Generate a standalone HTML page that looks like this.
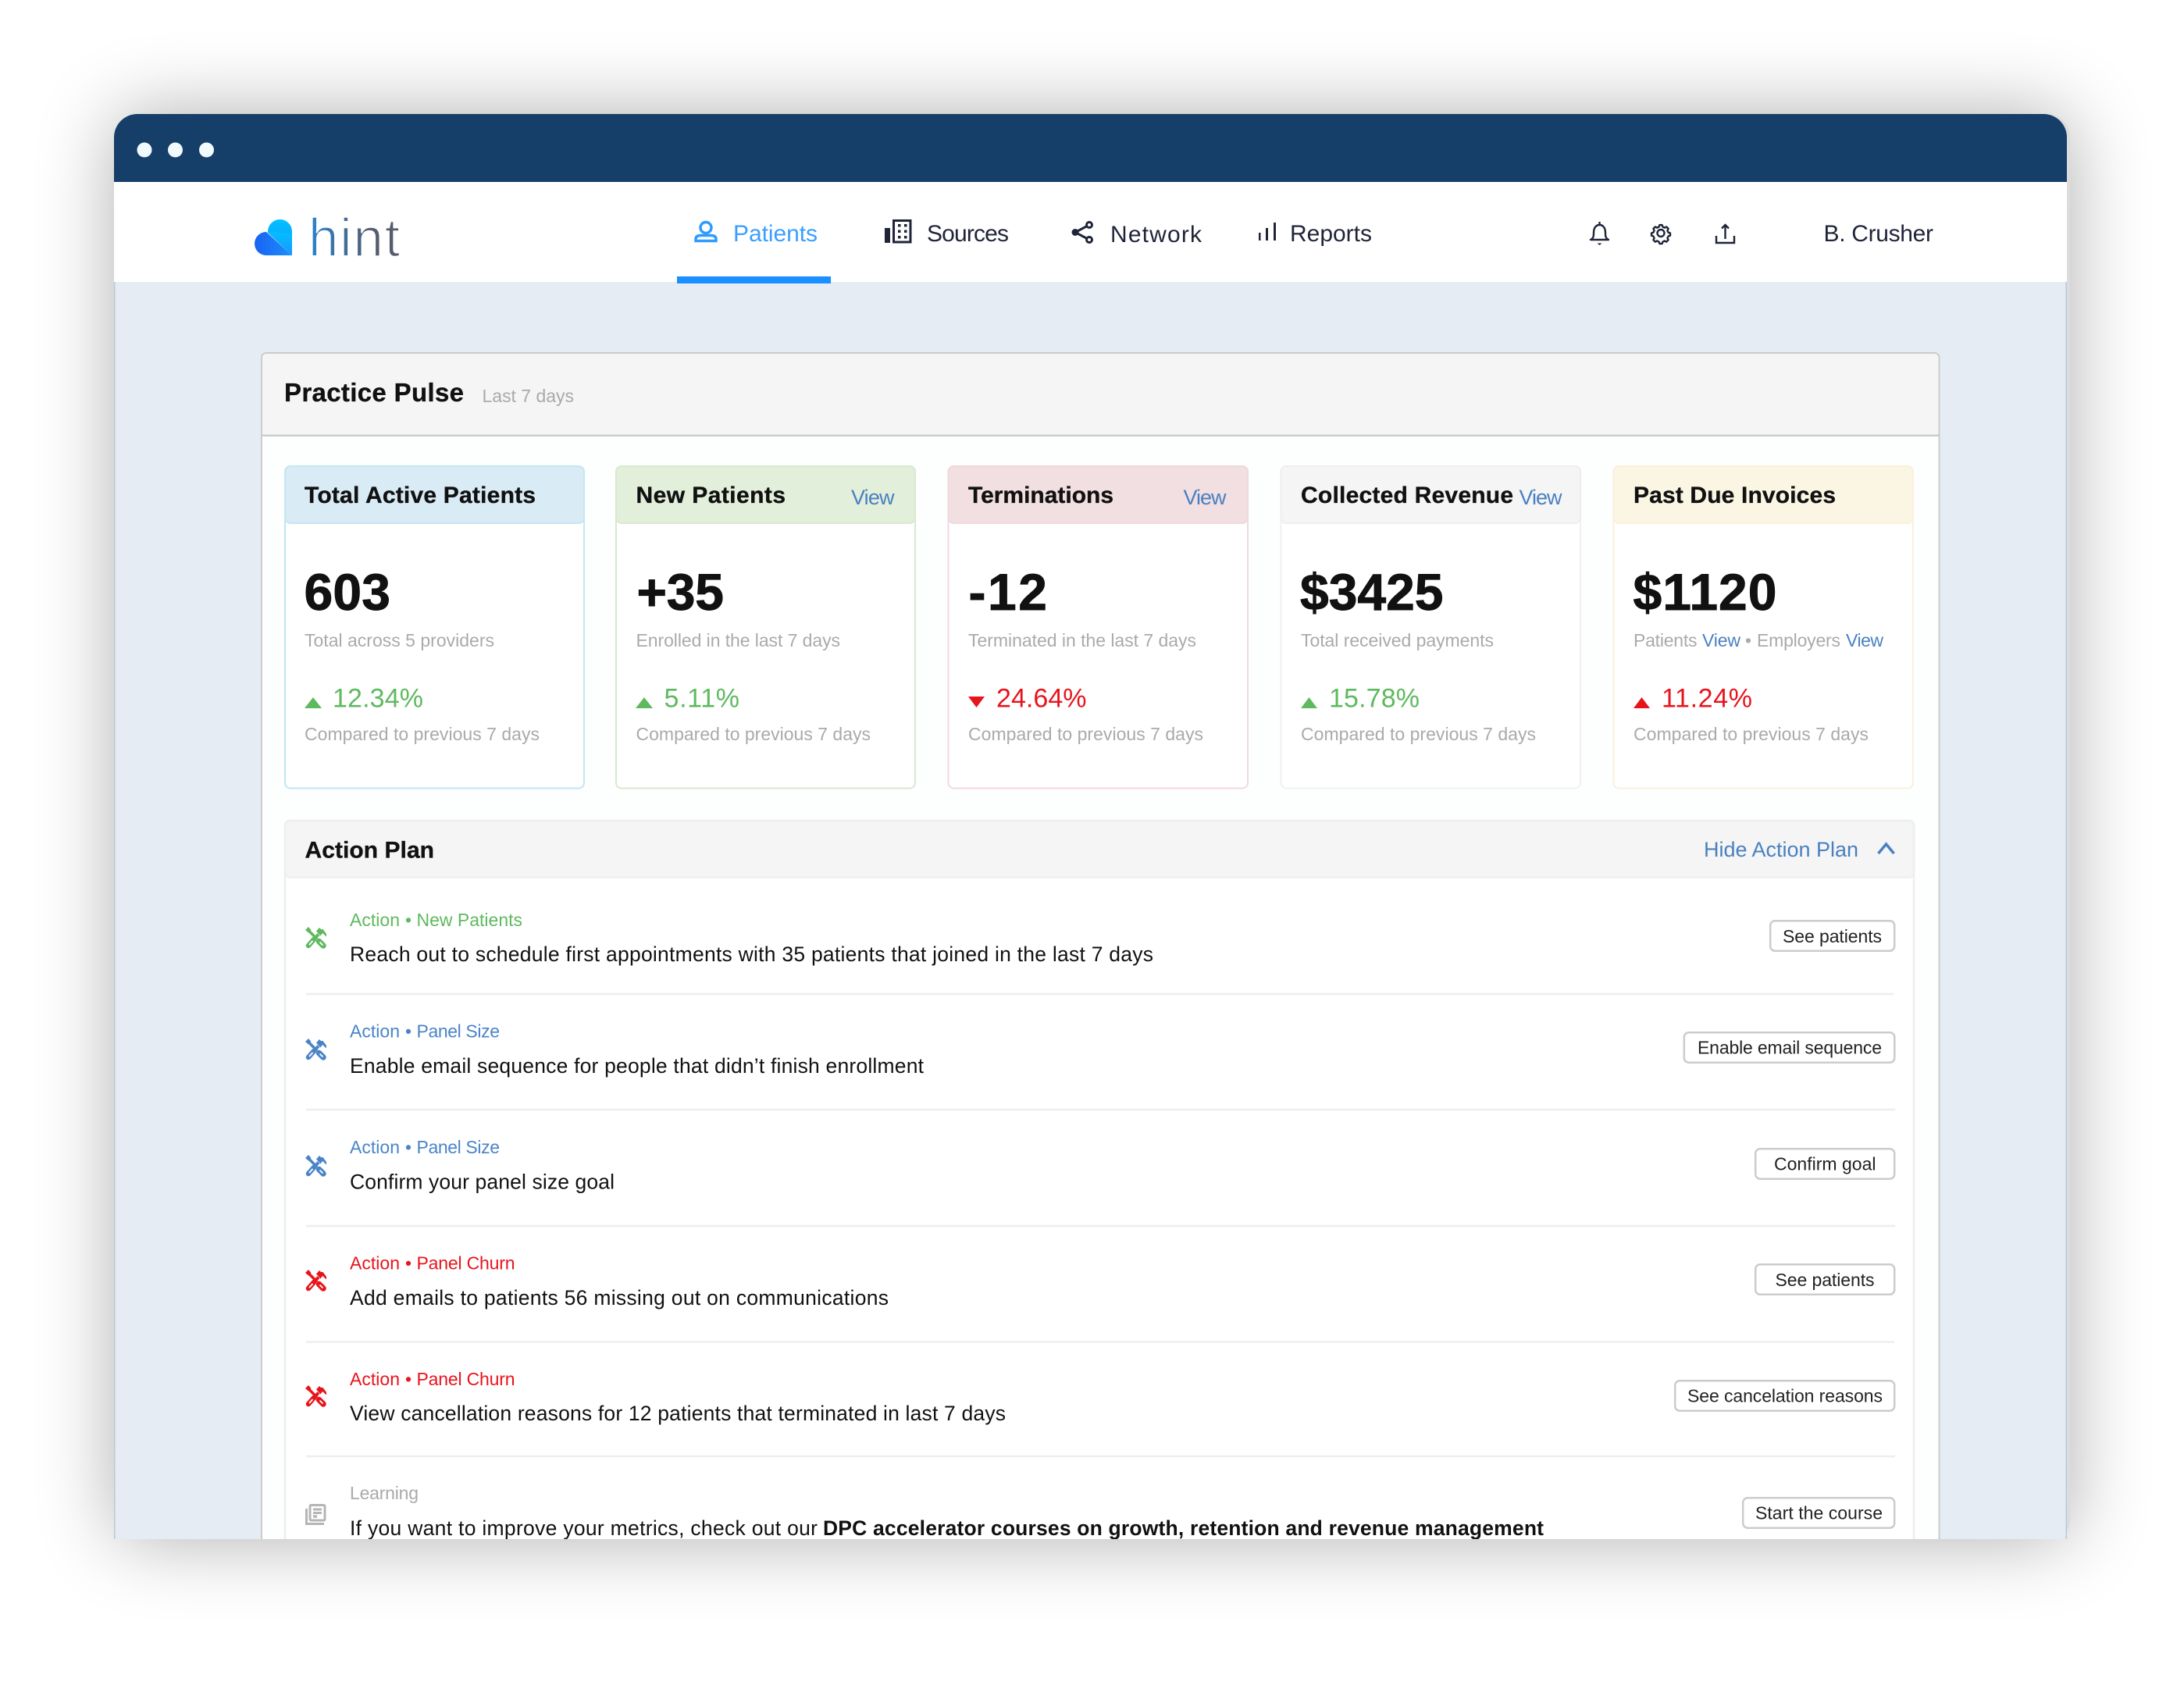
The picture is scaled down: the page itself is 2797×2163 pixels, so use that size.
<!DOCTYPE html>
<html lang="en">
<head>
<meta charset="utf-8">
<title>Hint - Practice Pulse</title>
<style>
html,body{margin:0;padding:0;background:#fff;width:2797px;height:2163px;overflow:hidden}
#sh{position:absolute;left:148px;top:146px;width:2503px;height:1825px;border-radius:30px 30px 24px 24px;box-shadow:0 0 100px rgba(0,0,0,.32);background:#dcdcdc}
svg{position:absolute;left:0;top:0}
text{font-family:"Liberation Sans",Arial,sans-serif;white-space:pre}
.nav{font-size:30px;fill:#1f2438}
.b{font-weight:700;fill:#111;stroke:#111;stroke-width:.35}
.t{font-size:30px;font-weight:700;fill:#111;stroke:#111;stroke-width:.35}
.v{font-size:27px;fill:#4a80c0}
.n{font-size:66px;font-weight:700;fill:#111;stroke:#111;stroke-width:.9}
.s{font-size:23px;fill:#aaa}
.sv{font-size:23px;fill:#4a80c0}
.d{font-size:34px}
.g{fill:#5fb95f}
.r{fill:#e8141c}
.bl{fill:#4a84c8}
.gy{fill:#aaa}
.l{font-size:23px}
.m{font-size:26.5px;fill:#111}
.bt{font-size:23px;fill:#222}
.br{fill:#fff;stroke:#ccc;stroke-width:2.5}
.dv{stroke:#eee;stroke-width:2.5}
</style>
</head>
<body>
<div id="sh"></div>
<svg width="2797" height="2163" viewBox="0 0 2797 2163" xmlns="http://www.w3.org/2000/svg">
<defs>
<clipPath id="win"><path d="M146 176a30 30 0 0 1 30-30H2617a30 30 0 0 1 30 30V1971H146Z"/></clipPath>
<linearGradient id="lg1" x1="0" y1="0" x2="0" y2="1"><stop offset="0" stop-color="#00c2ff"/><stop offset="1" stop-color="#1a94ff"/></linearGradient>
<linearGradient id="lg2" x1="0" y1="0" x2="1" y2="0"><stop offset="0" stop-color="#1a62f2"/><stop offset="1" stop-color="#1a90fb"/></linearGradient>
<linearGradient id="lg3" gradientUnits="userSpaceOnUse" x1="399" y1="0" x2="480" y2="0"><stop offset="0" stop-color="#2a82c8"/><stop offset="1" stop-color="#555c6d"/></linearGradient>
<g id="tools">
  <path d="M3 3.500L15 15.500" fill="none" stroke="currentColor" stroke-width="3.500"/>
  <path d="M0 4L4 0L7.500 4L4 7.500Z" fill="currentColor"/>
  <path d="M17.500 18.500L23 24" fill="none" stroke="currentColor" stroke-width="7.500" stroke-linecap="round"/>
  <path d="M18.500 19.500L22.500 23.500" fill="none" stroke="#fff" stroke-width="1.800"/>
  <path d="M11 16L17 9.500" fill="none" stroke="currentColor" stroke-width="4"/>
  <path d="M4 24L11 16" fill="none" stroke="currentColor" stroke-width="6.500" stroke-linecap="round"/>
  <path d="M5 23L9.500 18" fill="none" stroke="#fff" stroke-width="1.800"/>
  <path d="M14 5.500L18 1L20 3L22.500 3L27 9V12.500L22 8L19.500 11.500Z" fill="currentColor"/>
</g>
</defs>

<g clip-path="url(#win)">
<rect x="146" y="146" width="2501" height="1825" fill="#e6ecf4"/>
<rect x="146" y="361" width="1.500" height="1610" fill="#b9c8d8"/>
<rect x="2645.500" y="361" width="1.500" height="1610" fill="#b9c8d8"/>
<rect x="146" y="146" width="2501" height="87" fill="#153f69"/>
<circle cx="185" cy="192" r="9.500" fill="#f0faff"/>
<circle cx="224.500" cy="192" r="9.500" fill="#f0faff"/>
<circle cx="264.500" cy="192" r="9.500" fill="#f0faff"/>
<rect x="146" y="233" width="2501" height="128" fill="#fff"/>
<rect x="867" y="354" width="197" height="9" fill="#1a8fff"/>

<!-- logo -->
<path d="M343 296.500A15.500 15.500 0 0 1 374 296.500V327L343 298Z" fill="url(#lg1)"/>
<path d="M341 297A15 15 0 0 0 341 327H374Z" fill="url(#lg2)"/>
<path d="M343 296.500L374 327V300Z" fill="url(#lg1)"/>
<text x="395" y="328" font-size="69" fill="url(#lg3)" stroke="#fff" stroke-width="1.600" textLength="117">hint</text>

<!-- nav icons -->
<g fill="none" stroke="#2f9bff" stroke-width="3.500">
  <circle cx="904" cy="291.500" r="7"/>
  <path d="M891 308.500V306Q891 301.500 898 301.500H910Q917 301.500 917 306V308.500Z"/>
</g>
<text class="nav" x="939" y="309" style="fill:#3a9eff" textLength="108">Patients</text>

<rect x="1133" y="292" width="7" height="19" fill="#1f2438"/>
<rect x="1144.500" y="282.500" width="21.500" height="27.500" fill="none" stroke="#1f2438" stroke-width="3"/>
<g fill="#1f2438">
  <rect x="1150" y="287" width="3.500" height="3.500"/><rect x="1158" y="287" width="3.500" height="3.500"/>
  <rect x="1150" y="294.500" width="3.500" height="3.500"/><rect x="1158" y="294.500" width="3.500" height="3.500"/>
  <rect x="1150" y="302" width="3.500" height="3.500"/><rect x="1158" y="302" width="3.500" height="3.500"/>
</g>
<text class="nav" x="1187" y="309" textLength="105">Sources</text>

<path d="M1395 288L1377 297.500L1395 307" fill="none" stroke="#1f2438" stroke-width="3"/>
<circle cx="1395" cy="288" r="3.500" fill="#fff" stroke="#1f2438" stroke-width="3"/>
<circle cx="1395" cy="307" r="3.500" fill="#fff" stroke="#1f2438" stroke-width="3"/>
<circle cx="1377" cy="297.500" r="4.500" fill="#1f2438"/>
<text class="nav" x="1422" y="310" textLength="117">Network</text>

<g fill="#1f2438">
  <rect x="1612" y="298" width="2.500" height="10"/>
  <rect x="1621" y="292" width="3" height="16"/>
  <rect x="1631" y="285" width="3" height="23"/>
</g>
<text class="nav" x="1652" y="309" textLength="105">Reports</text>

<g fill="none" stroke="#1f2438" stroke-width="2.400">
  <path d="M2048.500 284V288"/>
  <path d="M2037 307H2060C2056 305 2056 302 2056 298C2056 292 2053 288 2048.500 288C2044 288 2041 292 2041 298C2041 302 2041 305 2037 307Z" stroke-linejoin="round"/>
  <g transform="translate(2127 298.500) scale(.8) translate(-2127 -298.500)" stroke-width="3">
    <path d="M2125 285.500h4l1 3 3 1.500 3-1.500 3 3-1.500 3 1.500 3 3 1v4l-3 1-1.500 3 1.500 3-3 3-3-1.500-3 1.500-1 3h-4l-1-3-3-1.500-3 1.500-3-3 1.500-3-1.500-3-3-1v-4l3-1 1.500-3-1.500-3 3-3 3 1.500 3-1.500Z" stroke-linejoin="round"/>
  </g>
  <circle cx="2127" cy="298.500" r="4.500"/>
  <path d="M2198 302V311H2221V302"/>
  <path d="M2209.500 306V288"/>
  <path d="M2205 292.500L2209.500 288L2214 292.500"/>
</g>
<path d="M2045.500 311.500H2051.500L2048.500 314Z" fill="#1f2438"/>
<text class="nav" x="2335.500" y="309" textLength="140.500">B. Crusher</text>

<!-- Panel -->
<rect x="335" y="452" width="2148.500" height="1600" rx="6" fill="#fdfefe" stroke="#ccc" stroke-width="2"/>
<path d="M336 558V458a5 5 0 0 1 5-5H2477.500a5 5 0 0 1 5 5V558Z" fill="#f5f5f5"/>
<rect x="335" y="556.500" width="2148.500" height="2.500" fill="#ccc"/>
<text class="b" x="364" y="514" font-size="33" textLength="230">Practice Pulse</text>
<text class="s" x="617.500" y="515" textLength="117.500">Last 7 days</text>

<!-- Cards -->
<rect x="365" y="597" width="383" height="412.500" rx="7" fill="#fff" stroke="#bfe6f3" stroke-width="2"/>
<rect x="365" y="597" width="383" height="73" rx="7" fill="#d9ebf5" stroke="#c6e6f2" stroke-width="2"/>
<rect x="789" y="597" width="383" height="412.500" rx="7" fill="#fff" stroke="#d8e9cf" stroke-width="2"/>
<rect x="789" y="597" width="383" height="73" rx="7" fill="#e2efdb" stroke="#d8e9cf" stroke-width="2"/>
<rect x="1214.500" y="597" width="383.500" height="412.500" rx="7" fill="#fff" stroke="#f2d9de" stroke-width="2"/>
<rect x="1214.500" y="597" width="383.500" height="73" rx="7" fill="#f2dfe1" stroke="#f0d8dc" stroke-width="2"/>
<rect x="1640.500" y="597" width="383.500" height="412.500" rx="7" fill="#fff" stroke="#f0f0f0" stroke-width="2"/>
<rect x="1640.500" y="597" width="383.500" height="73" rx="7" fill="#f5f5f5" stroke="#eeeeee" stroke-width="2"/>
<rect x="2066.500" y="597" width="383.500" height="412.500" rx="7" fill="#fff" stroke="#faf0dc" stroke-width="2"/>
<rect x="2066.500" y="597" width="383.500" height="73" rx="7" fill="#fbf6e4" stroke="#faf0dc" stroke-width="2"/>

<text class="t" x="390" y="644" textLength="296">Total Active Patients</text>
<text class="t" x="814.500" y="644" textLength="191.500">New Patients</text>
<text class="v" x="1090" y="646" textLength="55.500">View</text>
<text class="t" x="1240" y="644" textLength="186">Terminations</text>
<text class="v" x="1515.500" y="646" textLength="55">View</text>
<text class="t" x="1666" y="644" textLength="272">Collected Revenue</text>
<text class="v" x="1945.500" y="646" textLength="55">View</text>
<text class="t" x="2092" y="644" textLength="259">Past Due Invoices</text>

<text class="n" x="389.500" y="781" textLength="110.500">603</text>
<text class="n" x="815.500" y="781" textLength="111.500">+35</text>
<text class="n" x="1240.500" y="781" textLength="100.500">-12</text>
<text class="n" x="1665" y="781" textLength="183.500">$3425</text>
<text class="n" x="2091.500" y="781" textLength="184">$1120</text>

<text class="s" x="390" y="828" textLength="243">Total across 5 providers</text>
<text class="s" x="814.500" y="828" textLength="261.500">Enrolled in the last 7 days</text>
<text class="s" x="1240" y="828" textLength="292">Terminated in the last 7 days</text>
<text class="s" x="1666" y="828" textLength="247">Total received payments</text>
<text class="s" x="2092" y="828" textLength="81.500">Patients</text>
<text class="sv" x="2180" y="828" textLength="49">View</text>
<text class="s" x="2235" y="828">•</text>
<text class="s" x="2250" y="828" textLength="107">Employers</text>
<text class="sv" x="2364" y="828" textLength="48">View</text>

<path d="M390 907L401 893L412 907Z" class="g"/>
<text class="d g" x="426" y="905.500" textLength="116">12.34%</text>
<path d="M814 907L825 893L836 907Z" class="g"/>
<text class="d g" x="850.500" y="905.500" textLength="96.500">5.11%</text>
<path d="M1240 892L1250.500 906L1261 892Z" class="r"/>
<text class="d r" x="1276" y="905.500" textLength="115.500">24.64%</text>
<path d="M1666 907L1676.500 893L1687 907Z" class="g"/>
<text class="d g" x="1702" y="905.500" textLength="116">15.78%</text>
<path d="M2092 907L2102.500 893L2113 907Z" class="r"/>
<text class="d r" x="2128" y="905.500" textLength="116">11.24%</text>

<text class="s" x="390" y="948" textLength="301">Compared to previous 7 days</text>
<text class="s" x="814.500" y="948" textLength="300.500">Compared to previous 7 days</text>
<text class="s" x="1240" y="948" textLength="301">Compared to previous 7 days</text>
<text class="s" x="1666" y="948" textLength="301">Compared to previous 7 days</text>
<text class="s" x="2092" y="948" textLength="301">Compared to previous 7 days</text>

<!-- Action plan -->
<rect x="365" y="1051" width="2086" height="1000" rx="6" fill="#fff" stroke="#eee" stroke-width="2.500"/>
<rect x="365" y="1051" width="2086" height="72.500" rx="6" fill="#f5f5f5" stroke="#eee" stroke-width="2.500"/>
<text class="t" x="390.500" y="1098.500" textLength="165.500">Action Plan</text>
<text class="v" x="2182" y="1097" textLength="198">Hide Action Plan</text>
<path d="M2405.500 1093L2415.500 1081L2425.500 1093" fill="none" stroke="#4a80c0" stroke-width="3.500"/>

<!-- Row 1 -->
<use href="#tools" x="391" y="1187" style="color:#5fb95f"/>
<text class="l g" x="448" y="1186" textLength="64">Action</text><text class="l g" x="519" y="1186">•</text><text class="l g" x="533.500" y="1186" textLength="135.500">New Patients</text>
<text class="m" x="448" y="1231" textLength="1029">Reach out to schedule first appointments with 35 patients that joined in the last 7 days</text>
<rect class="br" x="2267.200" y="1179.200" width="159" height="38.500" rx="6"/>
<text class="bt" x="2283" y="1207" textLength="127">See patients</text>
<line class="dv" x1="392" y1="1273" x2="2425" y2="1273"/>

<!-- Row 2 -->
<use href="#tools" x="391" y="1330" style="color:#4a84c8"/>
<text class="l bl" x="448" y="1328.500" textLength="64">Action</text><text class="l bl" x="519" y="1328.500">•</text><text class="l bl" x="533.500" y="1328.500" textLength="106.500">Panel Size</text>
<text class="m" x="448" y="1374" textLength="735">Enable email sequence for people that didn’t finish enrollment</text>
<rect class="br" x="2156.800" y="1322.200" width="269.500" height="38.500" rx="6"/>
<text class="bt" x="2174" y="1349.500" textLength="236">Enable email sequence</text>
<line class="dv" x1="392" y1="1421" x2="2427" y2="1421"/>

<!-- Row 3 -->
<use href="#tools" x="391" y="1479" style="color:#4a84c8"/>
<text class="l bl" x="448" y="1477" textLength="64">Action</text><text class="l bl" x="519" y="1477">•</text><text class="l bl" x="533.500" y="1477" textLength="106.500">Panel Size</text>
<text class="m" x="448" y="1522.500" textLength="339">Confirm your panel size goal</text>
<rect class="br" x="2248.200" y="1471.200" width="178" height="38.500" rx="6"/>
<text class="bt" x="2272" y="1498.500" textLength="130.500">Confirm goal</text>
<line class="dv" x1="392" y1="1570" x2="2427" y2="1570"/>

<!-- Row 4 -->
<use href="#tools" x="391" y="1626" style="color:#e8141c"/>
<text class="l r" x="448" y="1625.500" textLength="64">Action</text><text class="l r" x="519" y="1625.500">•</text><text class="l r" x="533.500" y="1625.500" textLength="126">Panel Churn</text>
<text class="m" x="448" y="1671" textLength="690">Add emails to patients 56 missing out on communications</text>
<rect class="br" x="2248.200" y="1619.200" width="178" height="38.500" rx="6"/>
<text class="bt" x="2273.500" y="1647" textLength="127">See patients</text>
<line class="dv" x1="392" y1="1718.500" x2="2426" y2="1718.500"/>

<!-- Row 5 -->
<use href="#tools" x="391" y="1774" style="color:#e8141c"/>
<text class="l r" x="448" y="1774" textLength="64">Action</text><text class="l r" x="519" y="1774">•</text><text class="l r" x="533.500" y="1774" textLength="126">Panel Churn</text>
<text class="m" x="448" y="1819" textLength="840">View cancellation reasons for 12 patients that terminated in last 7 days</text>
<rect class="br" x="2145.200" y="1768.200" width="281" height="38.500" rx="6"/>
<text class="bt" x="2161" y="1795.500" textLength="250">See cancelation reasons</text>
<line class="dv" x1="392" y1="1865" x2="2427" y2="1865"/>

<!-- Row 6 -->
<g transform="translate(391 1926)" fill="none" stroke="#b5b5b5" stroke-width="3">
  <rect x="6" y="1.500" width="19" height="19.500" rx="1.500"/>
  <path d="M1.500 6V25.500H24"/>
  <path d="M10 7H21M10 11.500H21"/>
  <path d="M10 16H15" stroke-width="3.500"/>
</g>
<text class="l gy" x="448" y="1920" textLength="88">Learning</text>
<text class="m" x="448" y="1966" textLength="599">If you want to improve your metrics, check out our</text>
<text class="m" x="1054" y="1966" textLength="923" style="font-weight:700">DPC accelerator courses on growth, retention and revenue management</text>
<rect class="br" x="2232.200" y="1918.200" width="194" height="38.500" rx="6"/>
<text class="bt" x="2248" y="1945.500" textLength="163">Start the course</text>
</g>
</svg>
</body>
</html>
